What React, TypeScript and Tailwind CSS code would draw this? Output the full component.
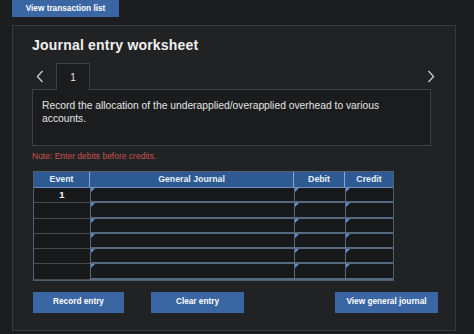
import React from 'react';

const rows = ['1', '', '', '', '', ''];

const Corner: React.FC = () => (
  <span className="absolute left-0 top-0 w-0 h-0 border-t-[4px] border-r-[4px] border-t-[#5b8fd0] border-r-transparent" />
);

const InputCell: React.FC<{ w: string }> = ({ w }) => (
  <div className={`${w} relative h-full border-l border-b-2 border-[#56697f] bg-[#18191b]`}>
    <Corner />
  </div>
);

const App: React.FC = () => {
  return (
    <div className="w-[474px] h-[334px] bg-[#1c1d1f] overflow-hidden font-['Liberation_Sans',Arial,sans-serif]">
      <button className="ml-[12px] h-[17px] w-[107px] bg-[#3a67a3] text-white text-[8.25px] font-bold flex items-center justify-center pt-px">
        View transaction list
      </button>
      <div className="ml-[12px] mt-[8px] w-[444px] h-[306px] border border-[#38393b] bg-[#212224] px-[19px] pt-[10px]">
        <h1 className="text-[14px] leading-[18px] font-bold text-[#f0f0f0] tracking-[0.2px]">Journal entry worksheet</h1>

        <div className="mt-[9px] w-[399px] flex items-end h-[26px]">
          <span className="w-[24px] pl-[4px] self-center text-[#c8c8c8]">
            <svg width="8" height="13" viewBox="0 0 8 13" fill="none" stroke="currentColor" strokeWidth="1.4"><path d="M6.5 1 L1.5 6.5 L6.5 12" /></svg>
          </span>
          <div className="relative z-10 -mb-px w-[34px] h-[27px] border border-b-0 border-[#3e3f41] bg-[#1b1c1e] flex items-center justify-center text-[10px] text-[#e8e8e8]">1</div>
          <span className="ml-auto self-center mr-[-4px] text-[#c8c8c8]">
            <svg width="8" height="13" viewBox="0 0 8 13" fill="none" stroke="currentColor" strokeWidth="1.4"><path d="M1.5 1 L6.5 6.5 L1.5 12" /></svg>
          </span>
        </div>

        <div className="w-[399px] h-[57px] border border-[#3e3f41] bg-[#1b1c1e] px-[9px] pt-[10px] text-[#e4e4e4]">
          <p className="max-w-[340px] text-[10.3px] leading-[12.5px]">
            Record the allocation of the underapplied/overapplied overhead to various accounts.
          </p>
        </div>

        <p className="mt-[4px] text-[8.5px] leading-[12px] text-[#c9534f]">Note: Enter debits before credits.</p>

        <div className="mt-[9px] ml-px w-[361px] border border-[#4f5f72]">
          <div className="flex h-[16px] bg-[#2d5a92] border-b border-[#6f8fb8] text-[8.75px] font-bold text-[#e8eef6]">
            <div className="w-[56px] flex items-center justify-center border-r border-[#8aa6cc]">Event</div>
            <div className="w-[204px] flex items-center justify-center border-r border-[#8aa6cc]">General Journal</div>
            <div className="w-[51px] flex items-center justify-center border-r border-[#8aa6cc]">Debit</div>
            <div className="flex-1 flex items-center justify-center">Credit</div>
          </div>
          {rows.map((r, i) => (
            <div key={i} className="flex h-[15.3px] bg-[#18191b]">
              <div className="w-[56px] h-full border-b border-[#4a4b4d] flex items-center justify-center text-[9.5px] font-bold text-white">{r}</div>
              <InputCell w="w-[204px]" />
              <InputCell w="w-[51px]" />
              <InputCell w="flex-1" />
            </div>
          ))}
        </div>

        <div className="mt-[11px] flex items-center text-[8.25px] font-bold text-white">
          <button className="ml-px w-[91px] h-[21px] bg-[#3a67a3]">Record entry</button>
          <button className="ml-[27px] w-[93px] h-[21px] bg-[#3a67a3]">Clear entry</button>
          <button className="ml-auto mr-[-2px] w-[103px] h-[21px] bg-[#3a67a3]">View general journal</button>
        </div>
      </div>
    </div>
  );
};

export default App;
